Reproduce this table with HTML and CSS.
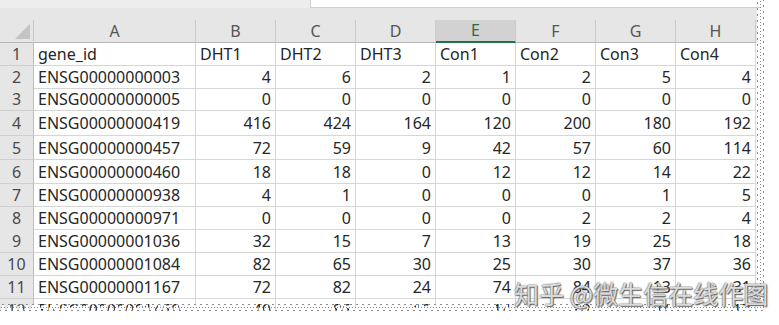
FILE: index.html
```html
<!DOCTYPE html>
<html>
<head>
<meta charset="utf-8">
<link rel="stylesheet" href="styles.css">
</head>
<body>
<div class="sheet">
  <div class="topbar"><div class="tb-left"></div><div class="tb-right"></div></div>
  <div class="ribbon"></div>
  <div class="row hdr">
    <div class="corner"><span class="tri"></span></div>
    <div class="ch">A</div><div class="ch">B</div><div class="ch">C</div><div class="ch">D</div>
    <div class="ch sel">E</div><div class="ch">F</div><div class="ch">G</div><div class="ch">H</div>
  </div>
  <div class="row h23"><div class="rh">1</div><div class="c">gene_id</div><div class="c">DHT1</div><div class="c">DHT2</div><div class="c">DHT3</div><div class="c">Con1</div><div class="c">Con2</div><div class="c">Con3</div><div class="c">Con4</div></div>
  <div class="row h22"><div class="rh">2</div><div class="c">ENSG00000000003</div><div class="c n">4</div><div class="c n">6</div><div class="c n">2</div><div class="c n">1</div><div class="c n">2</div><div class="c n">5</div><div class="c n">4</div></div>
  <div class="row h23"><div class="rh">3</div><div class="c">ENSG00000000005</div><div class="c n">0</div><div class="c n">0</div><div class="c n">0</div><div class="c n">0</div><div class="c n">0</div><div class="c n">0</div><div class="c n">0</div></div>
  <div class="row h25"><div class="rh">4</div><div class="c">ENSG00000000419</div><div class="c n">416</div><div class="c n">424</div><div class="c n">164</div><div class="c n">120</div><div class="c n">200</div><div class="c n">180</div><div class="c n">192</div></div>
  <div class="row h24"><div class="rh">5</div><div class="c">ENSG00000000457</div><div class="c n">72</div><div class="c n">59</div><div class="c n">9</div><div class="c n">42</div><div class="c n">57</div><div class="c n">60</div><div class="c n">114</div></div>
  <div class="row h24"><div class="rh">6</div><div class="c">ENSG00000000460</div><div class="c n">18</div><div class="c n">18</div><div class="c n">0</div><div class="c n">12</div><div class="c n">12</div><div class="c n">14</div><div class="c n">22</div></div>
  <div class="row h23"><div class="rh">7</div><div class="c">ENSG00000000938</div><div class="c n">4</div><div class="c n">1</div><div class="c n">0</div><div class="c n">0</div><div class="c n">0</div><div class="c n">1</div><div class="c n">5</div></div>
  <div class="row h22"><div class="rh">8</div><div class="c">ENSG00000000971</div><div class="c n">0</div><div class="c n">0</div><div class="c n">0</div><div class="c n">0</div><div class="c n">2</div><div class="c n">2</div><div class="c n">4</div></div>
  <div class="row h24"><div class="rh">9</div><div class="c">ENSG00000001036</div><div class="c n">32</div><div class="c n">15</div><div class="c n">7</div><div class="c n">13</div><div class="c n">19</div><div class="c n">25</div><div class="c n">18</div></div>
  <div class="row h23"><div class="rh">10</div><div class="c">ENSG00000001084</div><div class="c n">82</div><div class="c n">65</div><div class="c n">30</div><div class="c n">25</div><div class="c n">30</div><div class="c n">37</div><div class="c n">36</div></div>
  <div class="row h23"><div class="rh">11</div><div class="c">ENSG00000001167</div><div class="c n">72</div><div class="c n">82</div><div class="c n">24</div><div class="c n">74</div><div class="c n">84</div><div class="c n">13</div><div class="c n">31</div></div>
  <div class="row h23"><div class="rh">12</div><div class="c">ENSG00000001460</div><div class="c n">40</div><div class="c n">86</div><div class="c n">19</div><div class="c n">14</div><div class="c n">39</div><div class="c n">24</div><div class="c n">17</div></div>
  <div class="tear-right"></div>
  <div class="tear-bottom"></div>
</div>
<div class="watermark">知乎 @微生信在线作图</div>
</body>
</html>
```
FILE: styles.css
```css
html, body {
  margin: 0;
  padding: 0;
  background: #ffffff;
}
body {
  position: relative;
  width: 779px;
  height: 325px;
  overflow: hidden;
  font-family: "Noto Sans", "Noto Sans CJK SC", sans-serif;
}
.sheet {
  position: relative;
  width: 766px;
  height: 313px;
  overflow: hidden;
  background: #ffffff;
}
.topbar {
  display: flex;
  height: 8px;
}
.tb-left {
  width: 310px;
  background: #ededed;
}
.tb-right {
  flex: 1;
  background: #ffffff;
  border-left: 1px solid #cfcfcf;
  border-bottom: 1px solid #cfcfcf;
  box-sizing: border-box;
}
.ribbon {
  height: 12px;
  width: 757px;
  background: #e6e6e6;
}
.row {
  display: grid;
  grid-template-columns: 34px 162px repeat(7, 80px);
  width: 756px;
}
.h22 { height: 22px; }
.h23 { height: 23px; }
.h24 { height: 24px; }
.h25 { height: 25px; }
.hdr {
  height: 23px;
  background: #e6e6e6;
  width: 757px;
}
.corner {
  position: relative;
  border-right: 1px solid #c9c9c9;
  border-bottom: 1px solid #b8b8b8;
  box-sizing: border-box;
}
.tri {
  position: absolute;
  right: 3px;
  bottom: 3px;
  width: 0;
  height: 0;
  border-left: 15px solid transparent;
  border-bottom: 15px solid #c4c4c4;
}
.ch {
  box-sizing: border-box;
  border-right: 1px solid #cbcbcb;
  border-bottom: 1px solid #b8b8b8;
  color: #555555;
  font-size: 16px;
  line-height: 22px;
  text-align: center;
}
.ch.sel {
  background: #d2d2d2;
  border-bottom: 2px solid #217346;
  color: #2e6a45;
  line-height: 21px;
}
.rh {
  box-sizing: border-box;
  background: #e6e6e6;
  border-right: 1px solid #bdbdbd;
  border-bottom: 1px solid #cfcfcf;
  color: #4a4a4a;
  font-size: 16px;
  text-align: center;
  display: flex;
  align-items: center;
  justify-content: center;
}
.c {
  box-sizing: border-box;
  border-right: 1px solid #d6d6d6;
  border-bottom: 1px solid #d6d6d6;
  color: #262626;
  font-size: 16px;
  padding: 0 4px;
  display: flex;
  align-items: center;
  white-space: nowrap;
  overflow: hidden;
}
.c.n {
  justify-content: flex-end;
}
.tear-right {
  position: absolute;
  top: 0;
  right: 0;
  width: 9px;
  height: 100%;
  background-image: conic-gradient(from 69.4deg at 0 50%, #ffffff 41.2deg, transparent 0);
  background-size: 9px 6px;
  background-repeat: repeat-y;
  filter: drop-shadow(-1px 0 0 #8a8a8a);
}
.tear-bottom {
  position: absolute;
  left: 0;
  bottom: 0;
  width: 100%;
  height: 9px;
  background-image: conic-gradient(from 159.4deg at 50% 0, #ffffff 41.2deg, transparent 0);
  background-size: 6px 9px;
  background-repeat: repeat-x;
  filter: drop-shadow(0 -1px 0 #8a8a8a);
}
.watermark {
  position: absolute;
  left: 514px;
  top: 275px;
  font-family: "Noto Sans CJK SC", sans-serif;
  font-size: 25px;
  color: rgba(255, 255, 255, 0.8);
  text-shadow: 0 0 1px #555, 0 0 2px #777, 1px 1px 1px #666;
  white-space: nowrap;
}
```
